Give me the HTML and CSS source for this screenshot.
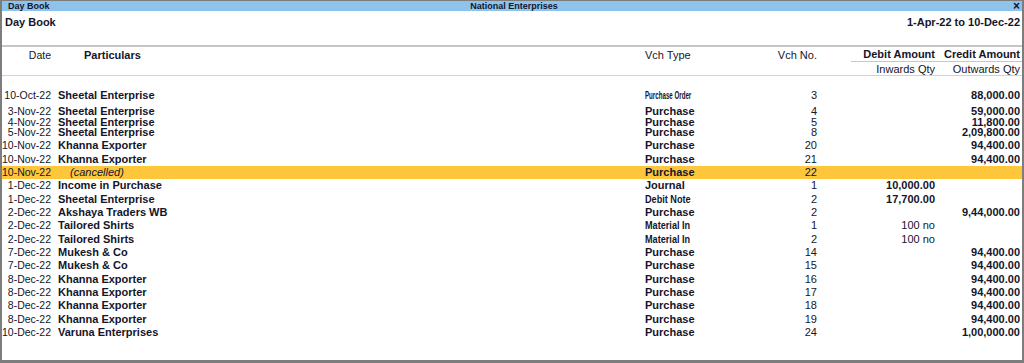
FILE: index.html
```
<!DOCTYPE html>
<html>
  <head>
    <title>Day Book - National Enterprises</title>
    <meta charset="UTF-8" />
    <meta name="viewport" content="width=device-width, initial-scale=1.0" />
    <link rel="stylesheet" href="styles.css">
  </head>
  <body>
    <div class="window">
      <div class="titlebar">
        <span>Day Book</span>
        <span class="company">National Enterprises</span>
        <span class="close">&times;</span>
      </div>

      <div class="report-head">
        <span>Day Book</span>
        <span>1-Apr-22 to 10-Dec-22</span>
      </div>

      <div class="colhead">
        <span class="date">Date</span>
        <span class="party-head">Particulars</span>
        <span>Vch Type</span>
        <span class="no">Vch No.</span>
        <div class="amounts">
          <span class="dr-head">Debit Amount</span>
          <span class="cr-head">Credit Amount</span>
        </div>
        <span class="qty-in">Inwards Qty</span>
        <span class="qty-out">Outwards Qty</span>
      </div>

      <!-- entries -->
      <div class="entries">
        <div class="row gap-after">
          <span class="date">10-Oct-22</span><span class="party">Sheetal Enterprise</span>
          <span class="type"><span class="squeeze-lg">Purchase Order</span></span><span class="no">3</span>
          <span class="dr"></span><span class="cr">88,000.00</span>
        </div>
        <div class="row tight">
          <span class="date">3-Nov-22</span><span class="party">Sheetal Enterprise</span>
          <span class="type">Purchase</span><span class="no">4</span>
          <span class="dr"></span><span class="cr">59,000.00</span>
        </div>
        <div class="row tight">
          <span class="date">4-Nov-22</span><span class="party">Sheetal Enterprise</span>
          <span class="type">Purchase</span><span class="no">5</span>
          <span class="dr"></span><span class="cr">11,800.00</span>
        </div>
        <div class="row tight gap-small">
          <span class="date">5-Nov-22</span><span class="party">Sheetal Enterprise</span>
          <span class="type">Purchase</span><span class="no">8</span>
          <span class="dr"></span><span class="cr">2,09,800.00</span>
        </div>
        <div class="row">
          <span class="date">10-Nov-22</span><span class="party">Khanna Exporter</span>
          <span class="type">Purchase</span><span class="no">20</span>
          <span class="dr"></span><span class="cr">94,400.00</span>
        </div>
        <div class="row">
          <span class="date">10-Nov-22</span><span class="party">Khanna Exporter</span>
          <span class="type">Purchase</span><span class="no">21</span>
          <span class="dr"></span><span class="cr">94,400.00</span>
        </div>
        <div class="row selected">
          <span class="date">10-Nov-22</span><span class="party cancelled">(cancelled)</span>
          <span class="type">Purchase</span><span class="no">22</span>
          <span class="dr"></span><span class="cr"></span>
        </div>
        <div class="row">
          <span class="date">1-Dec-22</span><span class="party">Income in Purchase</span>
          <span class="type">Journal</span><span class="no">1</span>
          <span class="dr">10,000.00</span><span class="cr"></span>
        </div>
        <div class="row">
          <span class="date">1-Dec-22</span><span class="party">Sheetal Enterprise</span>
          <span class="type"><span class="squeeze">Debit Note</span></span><span class="no">2</span>
          <span class="dr">17,700.00</span><span class="cr"></span>
        </div>
        <div class="row">
          <span class="date">2-Dec-22</span><span class="party">Akshaya Traders WB</span>
          <span class="type">Purchase</span><span class="no">2</span>
          <span class="dr"></span><span class="cr">9,44,000.00</span>
        </div>
        <div class="row">
          <span class="date">2-Dec-22</span><span class="party">Tailored Shirts</span>
          <span class="type"><span class="squeeze">Material In</span></span><span class="no">1</span>
          <span class="dr qty">100 no</span><span class="cr"></span>
        </div>
        <div class="row">
          <span class="date">2-Dec-22</span><span class="party">Tailored Shirts</span>
          <span class="type"><span class="squeeze">Material In</span></span><span class="no">2</span>
          <span class="dr qty">100 no</span><span class="cr"></span>
        </div>
        <div class="row">
          <span class="date">7-Dec-22</span><span class="party">Mukesh &amp; Co</span>
          <span class="type">Purchase</span><span class="no">14</span>
          <span class="dr"></span><span class="cr">94,400.00</span>
        </div>
        <div class="row">
          <span class="date">7-Dec-22</span><span class="party">Mukesh &amp; Co</span>
          <span class="type">Purchase</span><span class="no">15</span>
          <span class="dr"></span><span class="cr">94,400.00</span>
        </div>
        <div class="row">
          <span class="date">8-Dec-22</span><span class="party">Khanna Exporter</span>
          <span class="type">Purchase</span><span class="no">16</span>
          <span class="dr"></span><span class="cr">94,400.00</span>
        </div>
        <div class="row">
          <span class="date">8-Dec-22</span><span class="party">Khanna Exporter</span>
          <span class="type">Purchase</span><span class="no">17</span>
          <span class="dr"></span><span class="cr">94,400.00</span>
        </div>
        <div class="row">
          <span class="date">8-Dec-22</span><span class="party">Khanna Exporter</span>
          <span class="type">Purchase</span><span class="no">18</span>
          <span class="dr"></span><span class="cr">94,400.00</span>
        </div>
        <div class="row">
          <span class="date">8-Dec-22</span><span class="party">Khanna Exporter</span>
          <span class="type">Purchase</span><span class="no">19</span>
          <span class="dr"></span><span class="cr">94,400.00</span>
        </div>
        <div class="row">
          <span class="date">10-Dec-22</span><span class="party">Varuna Enterprises</span>
          <span class="type">Purchase</span><span class="no">24</span>
          <span class="dr"></span><span class="cr">1,00,000.00</span>
        </div>
      </div>
    </div>
  </body>
</html>
```

FILE: styles.css
```
* {
  box-sizing: border-box;
}
html, body {
  margin: 0;
  height: 100%;
}
body {
  font-family: "Liberation Sans", Arial, sans-serif;
  font-size: 11px;
  color: #15152a;
  background-color: #fff;
}
.window {
  height: 363px;
  border: 2px solid #7d7d7d;
  border-top-width: 1px;
  border-bottom-width: 3px;
  overflow: hidden;
}
.titlebar {
  height: 10px;
  background-color: #8ec4ec;
  display: grid;
  grid-template-columns: 1fr auto 1fr;
  align-items: center;
  padding: 0 2px 0 6px;
  font-size: 9px;
  font-weight: bold;
  line-height: 10px;
}
.close {
  justify-self: end;
  font-size: 12px;
}
.report-head {
  height: 36px;
  display: flex;
  justify-content: space-between;
  padding: 5px 2px 0 3px;
  line-height: 13px;
  font-weight: bold;
  border-bottom: 2px solid #c6c6c6;
}
.colhead, .row {
  display: grid;
  grid-template-columns: 56px 587px 100px 72px 118px 85px;
  padding-right: 2px;
  white-space: nowrap;
}
.colhead {
  height: 29px;
  grid-template-rows: 15px 13px;
  align-items: center;
  border-bottom: 1px solid #d2d2d2;
}
.party-head {
  font-weight: bold;
  padding-left: 26px;
}
.amounts {
  grid-column: 5 / 7;
  grid-row: 1;
  align-self: stretch;
  display: flex;
  align-items: center;
  margin-left: 34px;
  margin-right: -2px;
  border-bottom: 1px solid #c8c8c8;
  font-weight: bold;
}
.dr-head {
  width: 84px;
  text-align: right;
}
.cr-head {
  flex: 1;
  text-align: right;
  padding-right: 2px;
}
.qty-in {
  grid-column: 5;
  grid-row: 2;
  text-align: right;
}
.qty-out {
  grid-column: 6;
  grid-row: 2;
  text-align: right;
}
.entries {
  padding-top: 13.33px;
}
.row {
  height: 13.33px;
  line-height: 13.33px;
}
.row.tight {
  height: 10.5px;
  line-height: 10.5px;
}
.row.gap-after {
  margin-bottom: 3.75px;
}
.row.gap-small {
  margin-bottom: 1.4px;
}
.row.selected {
  background-color: #fec63a;
}
.date {
  text-align: right;
  padding-right: 7px;
  font-size: 10.5px;
}
.party, .type, .dr, .cr {
  font-weight: bold;
}
.party.cancelled {
  font-weight: normal;
  font-style: italic;
  padding-left: 12px;
}
.no, .dr, .cr {
  text-align: right;
}
.dr.qty {
  font-weight: normal;
}
.squeeze, .squeeze-lg {
  display: inline-block;
  transform-origin: left center;
}
.squeeze {
  transform: scaleX(0.83);
}
.squeeze-lg {
  transform: scaleX(0.56);
}
```
